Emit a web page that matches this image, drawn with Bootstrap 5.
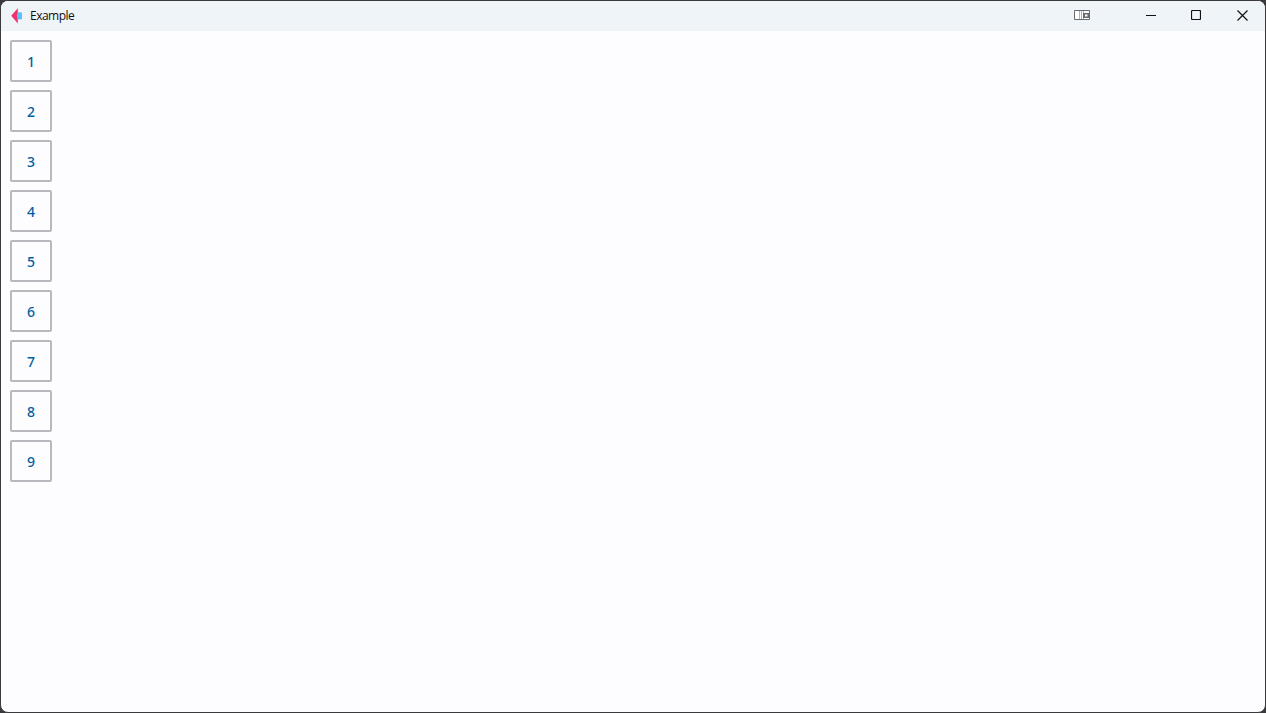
<!doctype html>
<html lang="en">
<head>
<meta charset="utf-8">
<title>Example</title>
<link href="https://cdn.jsdelivr.net/npm/bootstrap@5.3.0/dist/css/bootstrap.min.css" rel="stylesheet">
<style>
html, body { height: 100%; margin: 0; background: #3a3a3c; overflow: hidden; }
.app-window { height: 713px; border: 1px solid #3a3a3c; border-radius: 8px; background: #fdfdff; overflow: hidden; font-family: "Open Sans", "Noto Sans", sans-serif; }
.title-bar { height: 30px; background: #eff4f9; flex: none; }
.app-logo { width: 12px; height: 16px; margin-left: 10px; }
.title-text { font-size: 12px; margin-left: 7px; color: #111; line-height: 30px; letter-spacing: -.5px; }
.title-controls { padding-bottom: 2px; }
.pip-icon { margin-right: 37px; }
.win-btn { width: 46px; height: 28px; }
.num-list { padding: 9px 0 0 9px; gap: 8px; }
.num-btn { width: 42px; height: 42px; padding: 2px 0 0; border: 2px solid #b8b8bf; border-radius: 2px; background: #fdfdff; color: #00609f; font-family: "Noto Sans", "Open Sans", sans-serif; font-size: 14px; font-weight: 500; line-height: 1; }
.num-btn:hover { background: #f3f6fa; color: #00609f; border-color: #b8b8bf; }
</style>
</head>
<body>
<div class="app-window d-flex flex-column">
  <header class="title-bar d-flex align-items-center">
    <svg class="app-logo" viewBox="0 0 12 16" aria-hidden="true">
      <path d="M6.8 .2V15.4L.2 7.8Z" fill="#f2316f"/>
      <path d="M6.8 4.2 11 4.6V11.2L6.8 11.6 5.8 7.8Z" fill="#5cc0f2"/>
    </svg>
    <span class="title-text">Example</span>
    <div class="title-controls ms-auto d-flex align-items-center">
      <svg class="pip-icon" width="16" height="10" viewBox="0 0 16 10" aria-hidden="true">
        <path d="M.5.5H15.5V9.5H.5Z" fill="#fff" stroke="#6a6a70"/>
        <path d="M5.5 1V9M7.5 1V9M9.5 1V9" stroke="#b0b0b5"/>
        <path d="M9 3H15V8H9Z" fill="#6a6a70"/>
        <path d="M11 4.5H13.5V6.5H11Z" fill="#fff"/>
      </svg>
      <div class="win-btn d-flex align-items-center justify-content-center">
        <svg width="12" height="10" viewBox="0 0 12 10" aria-hidden="true"><path d="M2 5.5H12" stroke="#111" stroke-width="1.2"/></svg>
      </div>
      <div class="win-btn d-flex align-items-center justify-content-center">
        <svg width="10" height="10" viewBox="0 0 10 10" aria-hidden="true"><rect x=".5" y=".5" width="9" height="9" rx="1" fill="none" stroke="#111" stroke-width="1.2"/></svg>
      </div>
      <div class="win-btn d-flex align-items-center justify-content-center">
        <svg width="11" height="11" viewBox="0 0 11 11" aria-hidden="true"><path d="M.5.5 10.5 10.5M10.5.5.5 10.5" stroke="#111" stroke-width="1.2"/></svg>
      </div>
    </div>
  </header>
  <main class="num-list d-flex flex-column align-items-start">
    <button type="button" class="btn num-btn">1</button>
    <button type="button" class="btn num-btn">2</button>
    <button type="button" class="btn num-btn">3</button>
    <button type="button" class="btn num-btn">4</button>
    <button type="button" class="btn num-btn">5</button>
    <button type="button" class="btn num-btn">6</button>
    <button type="button" class="btn num-btn">7</button>
    <button type="button" class="btn num-btn">8</button>
    <button type="button" class="btn num-btn">9</button>
  </main>
</div>
<script src="https://cdn.jsdelivr.net/npm/bootstrap@5.3.0/dist/js/bootstrap.bundle.min.js"></script>
</body>
</html>
